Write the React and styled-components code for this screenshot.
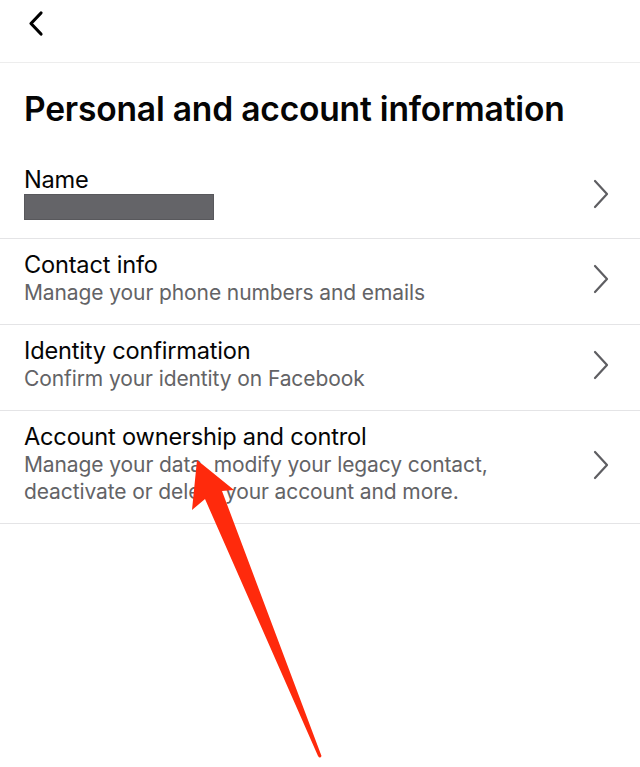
import React from 'react'
import styled, { createGlobalStyle } from 'styled-components'

const GlobalStyle = createGlobalStyle`
    html, body {
        margin: 0;
        padding: 0;
        background: #ffffff;
    }
    body {
        font-family: Inter, "Noto Sans", "Liberation Sans", sans-serif;
        -webkit-font-smoothing: antialiased;
    }
`

const Page = styled.div`
    position: relative;
    width: 640px;
    min-height: 767px;
    background: #ffffff;
    overflow: hidden;
`

const Header = styled.div`
    height: 62px;
    border-bottom: 1px solid #ededed;
    display: flex;
    align-items: flex-start;
    padding-left: 24px;
`

const BackButton = styled.button`
    border: none;
    background: none;
    padding: 0;
    margin-top: 10px;
    width: 24px;
    height: 28px;
    display: flex;
    align-items: center;
    justify-content: center;
    cursor: pointer;
`

const Title = styled.h1`
    margin: 0;
    padding: 26px 24px 25px;
    font-size: 33.6px;
    line-height: 40px;
    font-weight: 600;
    color: #050505;
    letter-spacing: -0.2px;
`

const List = styled.div`
    display: flex;
    flex-direction: column;
`

const Row = styled.div`
    display: flex;
    align-items: center;
    padding: 13px 30px 18px 24px;
    border-bottom: 1px solid #e4e4e6;
    cursor: pointer;
`

const RowText = styled.div`
    flex: 1;
    display: flex;
    flex-direction: column;
`

const RowTitle = styled.div`
    font-size: 23.6px;
    line-height: 26px;
    color: #050505;
    letter-spacing: -0.2px;
`

const RowSubtitle = styled.div`
    margin-top: 1px;
    font-size: 21px;
    line-height: 27px;
    color: #636366;
    letter-spacing: -0.1px;
    max-width: ${props => props.narrow ? '480px' : 'none'};
`

const Redacted = styled.div`
    margin-top: 1px;
    width: 190px;
    height: 26px;
    background: #646468;
    border: 1px solid #58585c;
    box-sizing: border-box;
`

const Chevron = styled.svg`
    flex: none;
    width: 18px;
    height: 30px;
`

const Arrow = styled.svg`
    position: absolute;
    left: 0;
    top: 0;
    pointer-events: none;
`

const items = [
    { title: 'Name', redacted: true },
    { title: 'Contact info', subtitle: 'Manage your phone numbers and emails' },
    { title: 'Identity confirmation', subtitle: 'Confirm your identity on Facebook' },
    {
        title: 'Account ownership and control',
        subtitle: 'Manage your data, modify your legacy contact, deactivate or delete your account and more.',
        narrow: true
    }
]

export default function App() {
    return (
        <Page>
            <GlobalStyle />
            <Header>
                <BackButton aria-label="Back">
                    <svg width="20" height="28" viewBox="0 0 20 28">
                        <path d="M15 3 L5 13.5 L15 24" fill="none" stroke="#000" strokeWidth="3.2" strokeLinecap="round" strokeLinejoin="round" />
                    </svg>
                </BackButton>
            </Header>
            <Title>Personal and account information</Title>
            <List>
                { items.map(item => (
                    <Row key={ item.title }>
                        <RowText>
                            <RowTitle>{ item.title }</RowTitle>
                            { item.redacted
                                ? <Redacted />
                                : <RowSubtitle narrow={ item.narrow }>{ item.subtitle }</RowSubtitle> }
                        </RowText>
                        <Chevron viewBox="0 0 18 30">
                            <path d="M3 2 L15 15 L3 28" fill="none" stroke="#5e5e62" strokeWidth="2.2" strokeLinecap="round" strokeLinejoin="round" />
                        </Chevron>
                    </Row>
                )) }
            </List>
            <Arrow width="640" height="767" viewBox="0 0 640 767">
                <path
                    d="M197 460 L234 490 L222 491 L321.5 756 Q320 759 318 756 L205 499 L192 510 Z"
                    fill="#ff2a0c"
                    strokeLinejoin="round"
                />
            </Arrow>
        </Page>
    )
}
